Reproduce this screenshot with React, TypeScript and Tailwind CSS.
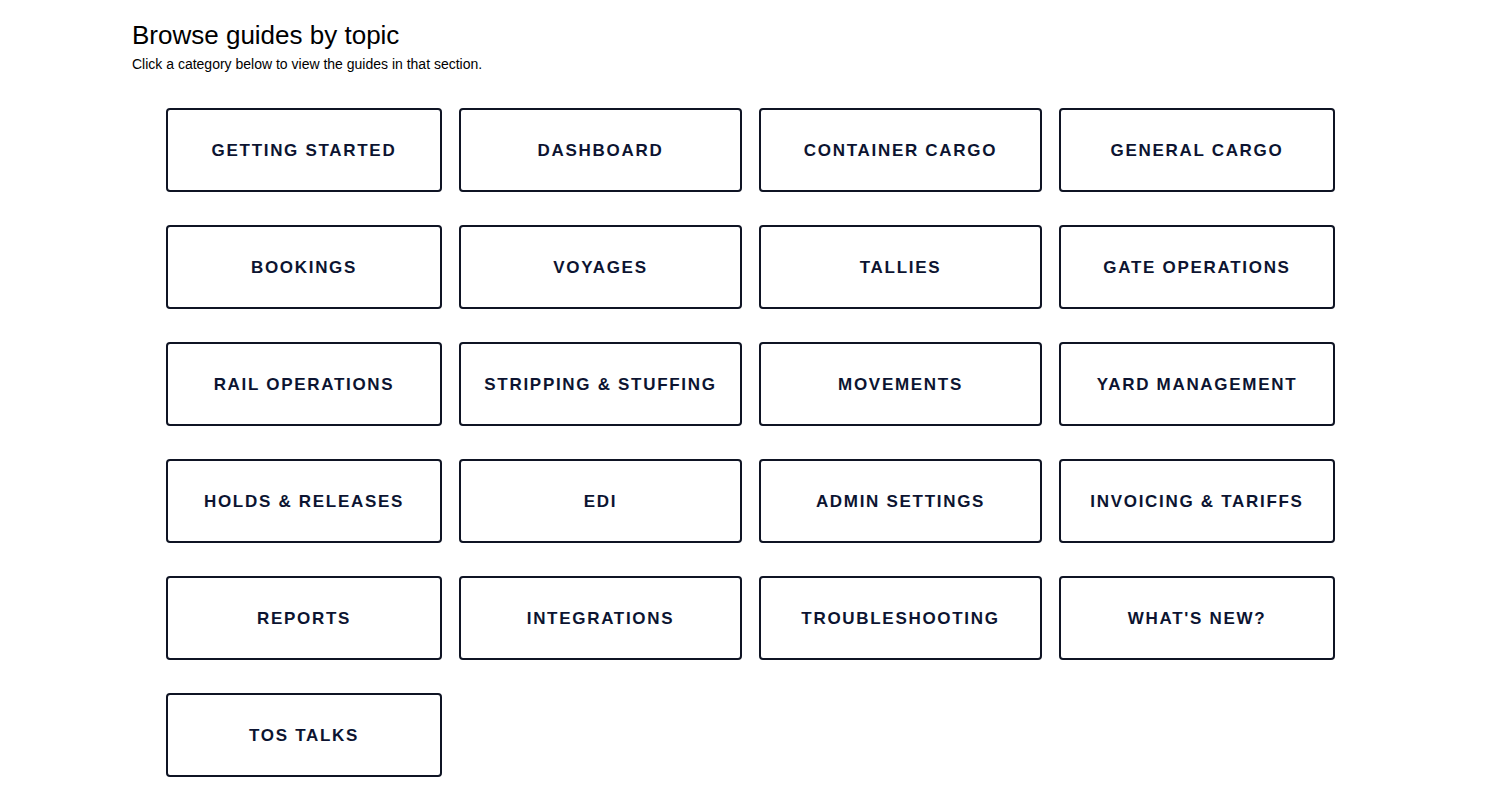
const topics = [
  "Getting Started",
  "Dashboard",
  "Container Cargo",
  "General Cargo",
  "Bookings",
  "Voyages",
  "Tallies",
  "Gate Operations",
  "Rail Operations",
  "Stripping & Stuffing",
  "Movements",
  "Yard Management",
  "Holds & Releases",
  "EDI",
  "Admin Settings",
  "Invoicing & Tariffs",
  "Reports",
  "Integrations",
  "Troubleshooting",
  "What's New?",
  "TOS Talks",
];

export default function App() {
  return (
    <div className="min-h-screen bg-white font-['Liberation_Sans',Arial,sans-serif] text-black">
      <div className="pl-[132px] pt-[20px]">
        <h1 className="text-[26px] leading-[30px] font-normal">Browse guides by topic</h1>
        <p className="mt-[4px] text-[14px] leading-[20px]">
          Click a category below to view the guides in that section.
        </p>
      </div>

      <div className="mt-[34px] ml-[166px] grid grid-cols-[276px_283px_283px_276px] gap-x-[17px] gap-y-[33px] pb-4">
        {topics.map((t) => (
          <a
            key={t}
            href="#"
            className="h-[84px] pt-[2px] flex items-center justify-center rounded-[4px] border-2 border-[#0f1424] bg-white text-[17px] font-bold uppercase tracking-[1.7px] text-[#0c1431]"
          >
            {t}
          </a>
        ))}
      </div>
    </div>
  );
}
